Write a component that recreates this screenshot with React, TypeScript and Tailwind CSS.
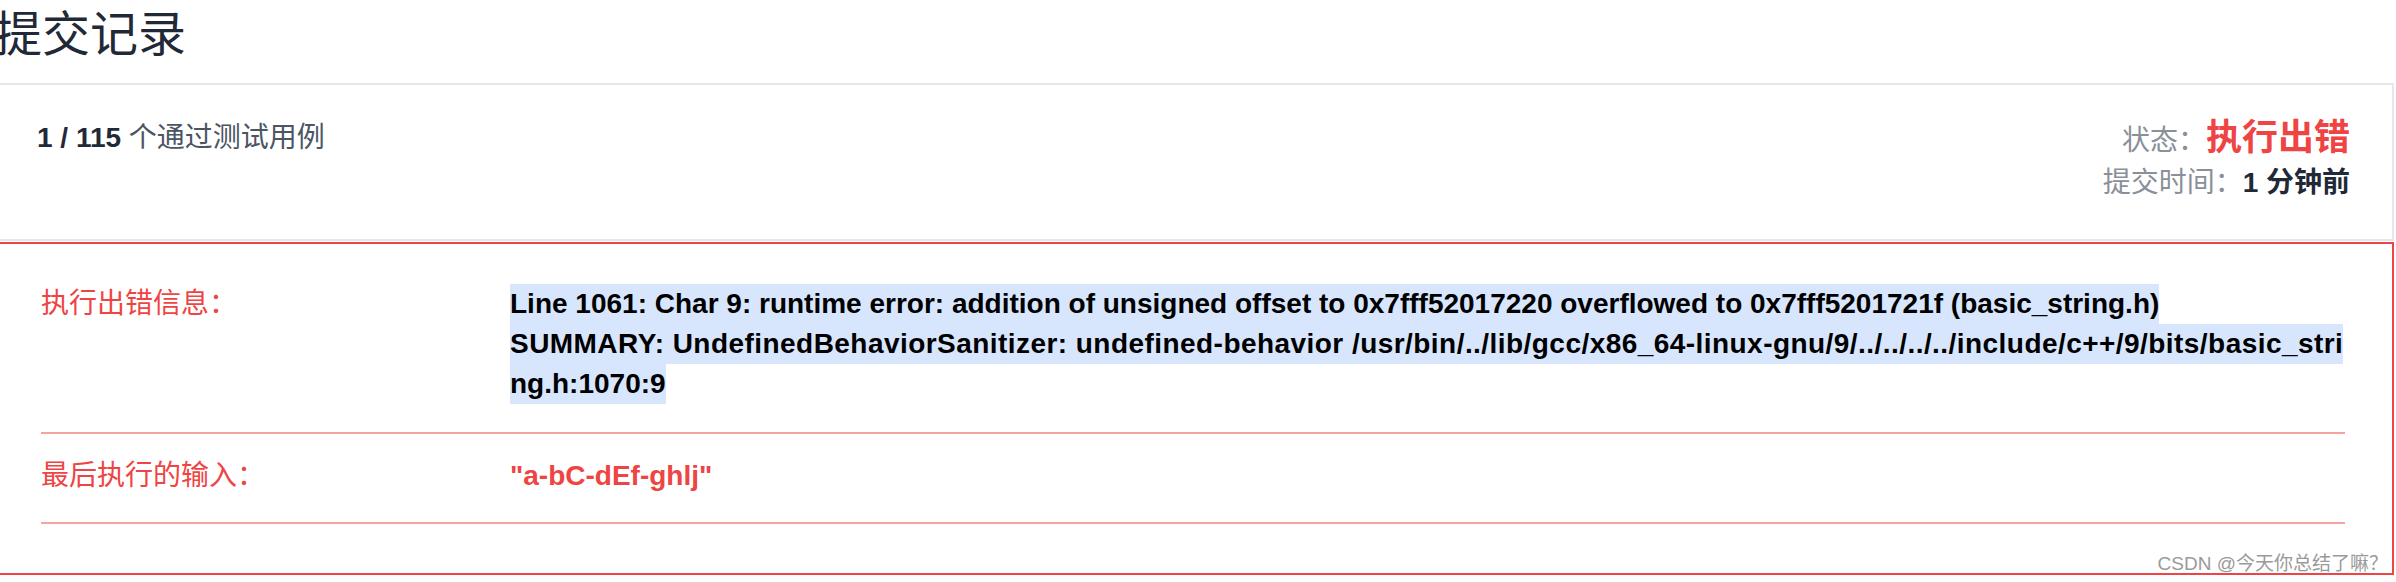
import React from 'react';

const errorLines = [
  {
    text: 'Line 1061: Char 9: runtime error: addition of unsigned offset to 0x7fff52017220 overflowed to 0x7fff5201721f (basic_string.h)',
    cls: '',
  },
  {
    text: 'SUMMARY: UndefinedBehaviorSanitizer: undefined-behavior /usr/bin/../lib/gcc/x86_64-linux-gnu/9/../../../../include/c++/9/bits/basic_stri',
    cls: 'tracking-[0.45px]',
  },
  { text: 'ng.h:1070:9', cls: '' },
];

const App: React.FC = () => {
  return (
    <div className="h-[582px] w-full overflow-hidden bg-white font-['Liberation_Sans','Noto_Sans_CJK_SC',sans-serif]">
      <div className="ml-[-6px] w-[2400px]">
        <h1 className="h-[83px] text-[48px] leading-[70px] font-normal text-[#1f2937]">提交记录</h1>

        {/* summary */}
        <div className="flex h-[158px] justify-between border-2 border-[#e5e7eb] pt-[31px] pl-[41px] pr-[42px]">
          <div className="text-[28px] leading-[44px] text-[#4b5563]">
            <span className="font-bold text-[#1f2937]">1 / 115</span> 个通过测试用例
          </div>
          <div className="flex flex-col items-end">
            <div className="flex items-baseline leading-[44px]">
              <span className="text-[28px] text-[#8a9099]">状态：</span>
              <span className="text-[36px] font-bold text-[#ef4444]">执行出错</span>
            </div>
            <div className="flex items-baseline leading-[40px]">
              <span className="text-[28px] text-[#8a9099]">提交时间：</span>
              <span className="text-[28px] font-bold text-[#1f2937]">1 分钟前</span>
            </div>
          </div>
        </div>

        {/* error details */}
        <div className="relative mt-[1px] h-[333px] border-2 border-[#ef4444] pl-[45px] pr-[47px]">
          <div className="flex border-b-2 border-[#f5a3a3] pt-[40px] pb-[28px]">
            <div className="w-[469px] shrink-0 text-[28px] leading-[40px] text-[#ef4444]">执行出错信息：</div>
            <div className="text-[28px] leading-[40px] font-bold text-black">
              {errorLines.map((line) => (
                <div key={line.text} className={`w-fit whitespace-nowrap bg-[#d7e6fd] ${line.cls}`}>
                  {line.text}
                </div>
              ))}
            </div>
          </div>
          <div className="flex border-b-2 border-[#f5a3a3] pt-[22px] pb-[26px]">
            <div className="w-[469px] shrink-0 text-[28px] leading-[40px] text-[#ef4444]">最后执行的输入：</div>
            <div className="text-[28px] leading-[40px] font-bold text-[#ef4444]">"a-bC-dEf-ghlj"</div>
          </div>

          <div className="absolute right-[4px] bottom-0 text-[19px] leading-[19px] text-[#9a9a9a]">
            CSDN @今天你总结了嘛？
          </div>
        </div>
      </div>
    </div>
  );
};

export default App;
